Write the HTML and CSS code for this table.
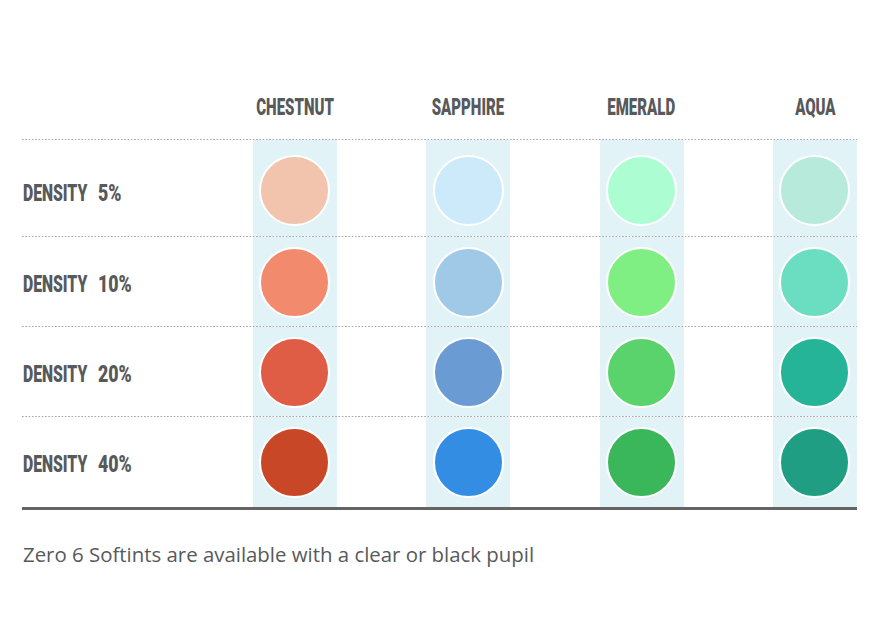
FILE: index.html
```html
<!DOCTYPE html>
<html lang="en">
<head>
<meta charset="utf-8">
<title>Zero 6 Softints</title>
<link rel="stylesheet" href="styles.css">
</head>
<body>
<div class="chart">
  <div class="row head">
    <div></div>
    <div class="h"><span>CHESTNUT</span></div>
    <div class="h"><span>SAPPHIRE</span></div>
    <div class="h"><span>EMERALD</span></div>
    <div class="h"><span>AQUA</span></div>
  </div>

  <div class="row r1">
    <div class="label"><span class="k">DENSITY</span><span class="p">5%</span></div>
    <div class="band"><div class="dot chestnut-5"></div></div>
    <div class="band"><div class="dot sapphire-5"></div></div>
    <div class="band"><div class="dot emerald-5"></div></div>
    <div class="band"><div class="dot aqua-5"></div></div>
  </div>

  <div class="row r2">
    <div class="label"><span class="k">DENSITY</span><span class="p">10%</span></div>
    <div class="band"><div class="dot chestnut-10"></div></div>
    <div class="band"><div class="dot sapphire-10"></div></div>
    <div class="band"><div class="dot emerald-10"></div></div>
    <div class="band"><div class="dot aqua-10"></div></div>
  </div>

  <div class="row r3">
    <div class="label"><span class="k">DENSITY</span><span class="p">20%</span></div>
    <div class="band"><div class="dot chestnut-20"></div></div>
    <div class="band"><div class="dot sapphire-20"></div></div>
    <div class="band"><div class="dot emerald-20"></div></div>
    <div class="band"><div class="dot aqua-20"></div></div>
  </div>

  <div class="row r4">
    <div class="label"><span class="k">DENSITY</span><span class="p">40%</span></div>
    <div class="band"><div class="dot chestnut-40"></div></div>
    <div class="band"><div class="dot sapphire-40"></div></div>
    <div class="band"><div class="dot emerald-40"></div></div>
    <div class="band"><div class="dot aqua-40"></div></div>
  </div>
</div>
<p class="note">Zero 6 Softints are available with a clear or black pupil</p>
</body>
</html>
```

FILE: styles.css
```css
html, body {
  margin: 0;
  padding: 0;
  background: #ffffff;
}

body {
  width: 888px;
  height: 639px;
  overflow: hidden;
}

.chart {
  margin-left: 22px;
  width: 835px;
  border-bottom: 3px solid #646464;
}

.row {
  display: grid;
  grid-template-columns: 141.67px repeat(4, 84px);
  column-gap: 89.33px;
  align-items: stretch;
}

.row > :first-child {
  margin-right: -89.33px;
}

.head {
  box-sizing: border-box;
  height: 139px;
  padding-top: 95px;
}

.h {
  display: flex;
  justify-content: center;
  font-family: "Roboto", "DejaVu Sans", sans-serif;
  font-weight: 900;
  font-size: 24px;
  line-height: 24px;
  color: #58595b;
  white-space: nowrap;
}

.h span,
.label span {
  display: inline-block;
  flex: none;
  transform: scaleX(0.625);
}

.h span {
  transform-origin: center;
}

.r1, .r2, .r3, .r4 {
  padding-top: 1px;
  background-image: linear-gradient(to right, #a8a8a8 55%, transparent 55%);
  background-size: 3.3px 1px;
  background-repeat: repeat-x;
  background-position: 0 0;
}

.label {
  display: flex;
  align-items: center;
  padding-left: 1px;
  padding-top: 4px;
  font-family: "Roboto", "DejaVu Sans", sans-serif;
  font-weight: 900;
  font-size: 24px;
  line-height: 24px;
  color: #58595b;
  white-space: nowrap;
}

.label .k {
  width: 75px;
  transform: scaleX(0.655);
  transform-origin: left center;
}

.label .p {
  transform: scaleX(0.74);
  transform-origin: left center;
}

.r1 .label { padding-top: 10px; }

.band {
  background: #e2f3f8;
  display: flex;
  justify-content: center;
  padding: 10px 0 8px;
}

.r1 .band { padding: 15px 0 10px; }
.r4 .band { padding: 10px 0 9px; }

.dot {
  box-sizing: border-box;
  width: 71px;
  height: 71px;
  border-radius: 50%;
  border: 2.5px solid #ffffff;
}

.chestnut-5  { background: #f2c4ad; }
.chestnut-10 { background: #f28b6d; }
.chestnut-20 { background: #e05d45; }
.chestnut-40 { background: #c84727; }

.sapphire-5  { background: #cdeafb; }
.sapphire-10 { background: #a0c9e8; }
.sapphire-20 { background: #6a9bd3; }
.sapphire-40 { background: #338ee3; }

.emerald-5  { background: #adfdd2; }
.emerald-10 { background: #80ef83; }
.emerald-20 { background: #5ad36c; }
.emerald-40 { background: #3ab75a; }

.aqua-5  { background: #b8eadc; }
.aqua-10 { background: #6bdec2; }
.aqua-20 { background: #25b497; }
.aqua-40 { background: #1f9e84; }

.note {
  margin: 32px 0 0 23px;
  font-family: "Open Sans", "Noto Sans", sans-serif;
  font-size: 20.4px;
  line-height: 24px;
  color: #58595b;
}
```
